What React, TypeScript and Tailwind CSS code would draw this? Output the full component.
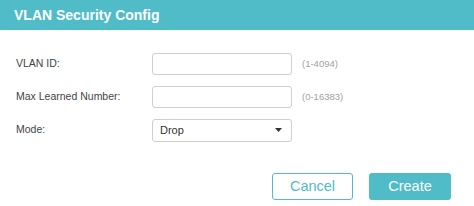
import React from "react";

const Row: React.FC<{ label: string; hint?: string; children: React.ReactNode }> = ({ label, hint, children }) => (
  <div className="flex items-center h-[22px]">
    <label className="w-[136px] text-[10.5px] text-[#444]">{label}</label>
    {children}
    {hint && <span className="ml-[10px] text-[9.5px] text-[#a0a0a0]">{hint}</span>}
  </div>
);

const App: React.FC = () => {
  return (
    <div className="w-[474px] h-[206px] bg-white flex flex-col" style={{ fontFamily: '"Liberation Sans", Arial, sans-serif' }}>
      <div className="h-[30px] bg-[#4fbcc7] flex items-center pl-[14px]">
        <h1 className="text-white font-bold text-[14px]">VLAN Security Config</h1>
      </div>
      <div className="pl-[16px] pt-[23px] flex flex-col gap-[11px]">
        <Row label="VLAN ID:" hint="(1-4094)">
          <input className="w-[140px] h-[22px] border border-[#cfcfcf] rounded-[3px] outline-none px-2 text-[11px]" />
        </Row>
        <Row label="Max Learned Number:" hint="(0-16383)">
          <input className="w-[140px] h-[22px] border border-[#cfcfcf] rounded-[3px] outline-none px-2 text-[11px]" />
        </Row>
        <Row label="Mode:">
          <div className="w-[140px] h-[23px] border border-[#cfcfcf] rounded-[3px] flex items-center justify-between pl-[7px] pr-[9px]">
            <span className="text-[11px] text-[#333]">Drop</span>
            <svg width="7" height="4" viewBox="0 0 7 4">
              <path d="M0 0 L7 0 L3.5 4 Z" fill="#333" />
            </svg>
          </div>
        </Row>
      </div>
      <div className="mt-auto mb-[6px] flex justify-end gap-[16px] pr-[23px]">
        <button className="w-[81px] h-[27px] border border-[#4fbcc7] rounded-[3px] text-[#4fbcc7] text-[14.5px] bg-white">Cancel</button>
        <button className="w-[82px] h-[27px] rounded-[3px] bg-[#4fbcc7] text-white text-[14.5px]">Create</button>
      </div>
    </div>
  );
};

export default App;
